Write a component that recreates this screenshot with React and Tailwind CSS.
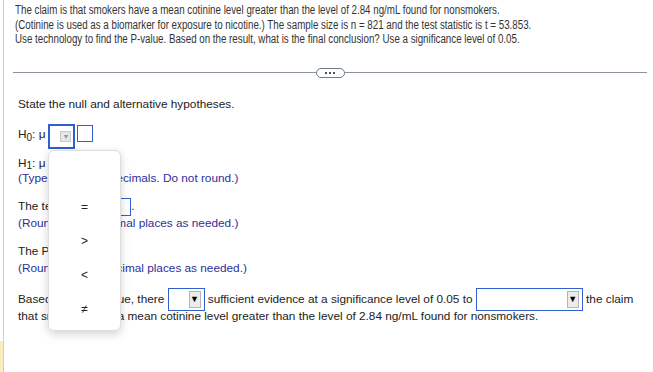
import React from 'react';

const Box = ({ className = '' }) => (
    <span className={`inline-block align-middle border border-[#2f5fd0] bg-white ${className}`} />
);

const Select = ({ width }) => (
    <span
        className="inline-flex items-center justify-end align-middle border border-[#2f5fd0] bg-white h-[23px] pr-[3px]"
        style={{ width }}
    >
        <span className="flex items-center justify-center w-[12px] h-[17px] bg-[#ececec] border border-[#b5b5b5] text-[9px] leading-none text-black">▼</span>
    </span>
);

const App = () => {
    return (
        <div className="relative flex w-full h-[372px] bg-white text-[#222] font-['Liberation_Sans',Arial,sans-serif] text-[11.8px] leading-[15px] overflow-hidden">
            {/* left strip */}
            <div className="flex flex-col w-[3px]">
                <div className="flex-1 bg-white" />
                <div className="h-[31px] bg-[#fcebc0]" />
            </div>
            <div className="w-px bg-[#cfcfcf]" />

            <div className="flex-1 min-w-0 pl-[11px] pr-[5px] pt-[3px]">
                {/* question text is rendered condensed in the source */}
                <p className="w-[140%] whitespace-nowrap origin-top-left scale-x-[0.78] text-[12.5px] leading-[14.5px] text-[#333]">
                    The claim is that smokers have a mean cotinine level greater than the level of 2.84 ng/mL found for nonsmokers.<br />
                    (Cotinine is used as a biomarker for exposure to nicotine.) The sample size is n = 821 and the test statistic is t = 53.853.<br />
                    Use technology to find the P-value. Based on the result, what is the final conclusion? Use a significance level of 0.05.
                </p>

                {/* separator */}
                <div className="flex items-center mt-[21px] mr-[1px] -ml-[2px] h-[10px]">
                    <div className="flex-1 h-px bg-[#8a929c]" />
                    <div className="flex items-center justify-center w-[29px] h-[10px] border border-[#6f7a86] rounded-full gap-[2px]">
                        <span className="w-[2px] h-[2px] bg-[#4a5562]" />
                        <span className="w-[2px] h-[2px] bg-[#4a5562]" />
                        <span className="w-[2px] h-[2px] bg-[#4a5562]" />
                    </div>
                    <div className="flex-1 h-px bg-[#8a929c]" />
                </div>

                <div className="pl-[3px]">
                    <p className="mt-[19px]">State the null and alternative hypotheses.</p>

                    {/* H0 row */}
                    <div className="flex items-center mt-[12px] h-[25px]">
                        <span className="-mt-[3px]">H<sub className="text-[10px]">0</sub>: μ</span>
                        <span className="flex items-center justify-end w-[27px] h-[25px] ml-[3px] border-2 border-[#2f5fd0] pr-[2px]">
                            <span className="flex items-center justify-center w-[11px] h-[11px] bg-[#e6e6e6] border border-[#c8c8c8] text-[7px] leading-none text-[#8d95a8]">▼</span>
                        </span>
                        <Box className="w-[16px] h-[17px] ml-[2px] -mt-[6px]" />
                    </div>

                    <p className="mt-[7px]">H<sub className="text-[10px]">1</sub>: μ</p>
                    <p className="text-[#2e2e9c]">(Type integers or decimals. Do not round.)</p>

                    <p className="mt-[12px] flex items-center h-[18px]">
                        The test statistic is&nbsp;<Box className="w-[13px] h-[18px]" />.
                    </p>
                    <p className="text-[#2e2e9c]">(Round to two decimal places as needed.)</p>

                    <p className="mt-[12px] flex items-center h-[18px]">
                        The P-value is&nbsp;<Box className="w-[13px] h-[18px]" />.
                    </p>
                    <p className="text-[#2e2e9c]">(Round to three decimal places as needed.)</p>

                    <div className="mt-[12px] flex items-center h-[23px] whitespace-nowrap">
                        Based on the P-value, there&nbsp;
                        <Select width={37} />
                        &nbsp;sufficient evidence at a significance level of 0.05 to&nbsp;
                        <Select width={107} />
                        &nbsp;the claim
                    </div>
                    <p className="-mt-[2px]">that smokers have a mean cotinine level greater than the level of 2.84 ng/mL found for nonsmokers.</p>
                </div>
            </div>

            {/* open dropdown list */}
            <div className="absolute left-[48px] top-[150px] w-[73px] h-[181px] bg-white border border-[#dedede] rounded-[6px] shadow-[0_3px_10px_rgba(0,0,0,0.18)] flex flex-col items-center pt-[49px] gap-[20px] text-[12px] leading-[14px]">
                <span>=</span>
                <span>&gt;</span>
                <span>&lt;</span>
                <span>≠</span>
            </div>
        </div>
    );
};

export default App;
